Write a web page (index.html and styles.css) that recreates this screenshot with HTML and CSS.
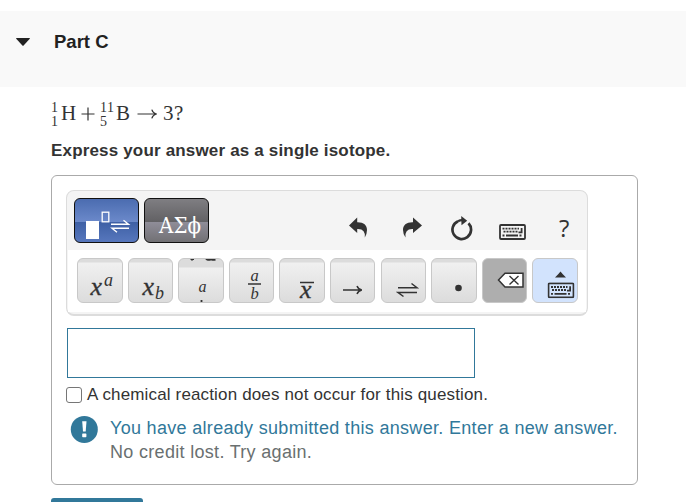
FILE: index.html
```html
<!DOCTYPE html>
<html lang="en">
<head>
  <meta charset="UTF-8">
  <meta name="viewport" content="width=device-width, initial-scale=1.0">
  <title>Part C</title>
  <link rel="stylesheet" href="styles.css">
</head>
<body>
  <svg class="defs" width="0" height="0">
    <symbol id="keyboard" viewBox="0 0 27 16">
      <rect x="1" y="1" width="25" height="14" rx="1" fill="none" stroke="#333" stroke-width="1.8"/>
      <path d="M3.5 4.7H20M4.5 7.7H19M3.5 11.5H5.5M20.5 11.5H23.5" stroke="#333" stroke-width="1.8" stroke-dasharray="2 1" fill="none"/>
      <path d="M7 11.5H19M22.6 4V8.3H19.5" stroke="#333" stroke-width="1.8" fill="none"/>
    </symbol>
  </svg>

  <header class="part-header">
    <svg class="caret" width="14" height="8" viewBox="0 0 14 8"><path d="M0 0.5Q0 0 .7 0H13.3Q14 0 14 .5L7.6 7.5Q7 8 6.4 7.5Z" fill="#222"/></svg>
    <h2>Part C</h2>
  </header>

  <main class="content">
    <div class="formula">
      <span class="scripts"><span>1</span><span>1</span></span>
      <span class="atom">H</span>
      <svg class="plus" width="14" height="14" viewBox="0 0 14 14"><path d="M7 .5V13.5M.5 7H13.5" stroke="#333" stroke-width="1.2" fill="none"/></svg>
      <span class="scripts wide"><span>11</span><span>5</span></span>
      <span class="atom">B</span>
      <svg class="to" width="20" height="10" viewBox="0 0 20 10"><path d="M.5 5H19M14.8 .7C15.5 3 17 4.4 19.2 5C17 5.6 15.5 7 14.8 9.3" stroke="#333" stroke-width="1.2" fill="none"/></svg>
      <span class="result">3?</span>
    </div>
    <p class="instruction">Express your answer as a single isotope.</p>

    <section class="answer-box">
      <div class="toolbar">
        <div class="toolbar-top">
          <button class="mode mode-active" aria-label="Templates">
            <svg width="65" height="45" viewBox="0 0 65 45">
              <rect x="12" y="23" width="13" height="18" fill="#fff"/>
              <rect x="28.2" y="14.2" width="6.6" height="9.6" fill="none" stroke="#fff" stroke-width="1.3"/>
              <path d="M37 26.2H54.5L49.5 22.2M55 30.2H38L43 34.2" stroke="#fff" stroke-width="1.4" fill="none"/>
            </svg>
          </button>
          <button class="mode mode-greek" aria-label="Symbols">ΑΣϕ</button>
          <div class="actions">
            <svg width="19" height="21" viewBox="0 0 19 21"><path d="M0 8.5L8.2 .5V5.2C14.5 5 18 8 18 13Q18 17 15.8 20.5Q16.8 11.5 8.2 12V16Z" fill="#333"/></svg>
            <svg width="20" height="21" viewBox="0 0 20 21"><path d="M20 8.5L11 .5V5.2C4.5 5 1 8 1 13Q1 17 3.5 20.5Q2.5 11.5 11 12V16Z" fill="#333"/></svg>
            <svg width="22" height="25" viewBox="0 0 22 25"><path d="M7 5.2A9.3 9.3 0 1 0 17.5 7.3" fill="none" stroke="#333" stroke-width="2.7"/><path d="M10.2 0L16.2 4.7L10.5 9.2Z" fill="#333"/><path d="M7 5.2Q9 4.2 11 4.2" stroke="#333" stroke-width="2.3" fill="none"/></svg>
            <svg class="kb" width="27" height="16"><use href="#keyboard"/></svg>
            <span class="help">?</span>
          </div>
        </div>
        <div class="toolbar-keys">
          <button class="key"><svg viewBox="0 0 45 45"><text class="math math-x" x="13.5" y="36.5" font-size="26">x</text><text class="math" x="27" y="27.5" font-size="18">a</text></svg></button>
          <button class="key"><svg viewBox="0 0 45 45"><text class="math math-x" x="14.5" y="36.5" font-size="26">x</text><text class="math" x="27" y="40.5" font-size="18">b</text></svg></button>
          <button class="key key-stack"><svg viewBox="0 0 45 45"><path d="M14 0V2.6M16 1H12.5M28 0Q28.5 2.5 32.5 1.5V0M32.5 0Q33 2.6 37.5 1.5" stroke="#333" stroke-width="1.9" fill="none"/><text class="math" x="20.5" y="33.5" font-size="16">a</text><path d="M23.5 42V44.5" stroke="#333" stroke-width="1.8"/></svg></button>
          <button class="key"><svg viewBox="0 0 45 45"><text class="math" x="21.5" y="22.5" font-size="16.5">a</text><path d="M19 26H32" stroke="#333" stroke-width="1.5"/><text class="math" x="21.5" y="41" font-size="16.5">b</text></svg></button>
          <button class="key"><svg viewBox="0 0 45 45"><path d="M21 24.5H35" stroke="#333" stroke-width="1.6"/><text class="math math-x" x="21" y="40" font-size="26">x</text></svg></button>
          <button class="key"><svg viewBox="0 0 45 45"><path d="M13 32H31.5M27 28C28 30.5 29.5 31.5 31.8 32C29.5 32.5 28 33.5 27 36" stroke="#333" stroke-width="1.5" fill="none"/></svg></button>
          <button class="key"><svg viewBox="0 0 45 45"><path d="M17 29.7H36L30.5 25.5M36 34.5H17L22.5 38.5" stroke="#333" stroke-width="1.5" fill="none"/></svg></button>
          <button class="key"><svg viewBox="0 0 45 45"><circle cx="27.5" cy="30" r="3.3" fill="#333"/></svg></button>
          <button class="key key-delete"><svg viewBox="0 0 45 45"><path d="M16.5 22L23 15.3H41V29H23Z" fill="#fff" stroke="#333" stroke-width="1.5"/><path d="M27.5 18L36.5 26.5M36.5 18L27.5 26.5" stroke="#333" stroke-width="1.4"/></svg></button>
          <button class="key key-keyboard"><svg viewBox="0 0 45 45"><path d="M23 19.5Q27 15.5 28.5 13.5Q30 15.5 34 19.5Z" fill="#333"/><use href="#keyboard" x="15.5" y="24.3" width="27" height="16"/></svg></button>
        </div>
      </div>

      <input class="answer-input" type="text" aria-label="Answer">

      <label class="no-reaction"><input type="checkbox"><span>A chemical reaction does not occur for this question.</span></label>

      <div class="feedback">
        <svg width="28" height="28" viewBox="0 0 28 28"><circle cx="14.3" cy="14.4" r="13.5" fill="#31789a"/><path d="M12.2 6.2H16.5L15.7 16.4H13Z" fill="#fff"/><rect x="12.2" y="18.4" width="4.2" height="3.8" rx=".7" fill="#fff"/></svg>
        <div class="feedback-text">
          <p class="feedback-title">You have already submitted this answer. Enter a new answer.</p>
          <p class="feedback-note">No credit lost. Try again.</p>
        </div>
      </div>
    </section>

    <button class="submit" aria-label="Submit"></button>
  </main>
</body>
</html>
```
FILE: styles.css
```css
* {
  box-sizing: border-box;
}
html,
body {
  height: 100%;
  overflow: hidden;
}
body {
  margin: 0;
  padding-top: 11px;
  background: #fff;
  color: #333;
  font-family: "Liberation Sans", Arial, sans-serif;
}
h2,
p {
  margin: 0;
}
button {
  padding: 0;
  border: none;
}
.defs {
  position: absolute;
}
.part-header {
  display: flex;
  align-items: center;
  gap: 24px;
  height: 76px;
  padding: 0 0 14px 16px;
  background: #f9f9f9;
}
.part-header h2 {
  color: #222;
  font-size: 18.5px;
  line-height: 22px;
}
.content {
  padding-left: 51px;
}

/* formula */
.formula {
  display: flex;
  align-items: center;
  height: 53px;
  padding-bottom: 2px;
  font-family: "Liberation Serif", "Times New Roman", serif;
  font-size: 21px;
  line-height: 24px;
}
.scripts {
  display: flex;
  flex-direction: column;
  width: 10px;
  padding-top: 4px;
  font-size: 14px;
  line-height: 14px;
}
.scripts.wide {
  width: 16px;
  letter-spacing: 0.5px;
}
.atom {
  width: 15px;
}
.plus {
  margin: 2px 5px 0 5px;
}
.to {
  margin: 2px 6px 0 6px;
}
.result {
  letter-spacing: 0.5px;
}
.instruction {
  height: 35px;
  font-size: 17px;
  font-weight: bold;
  line-height: 22px;
  letter-spacing: 0.17px;
}

/* answer area */
.answer-box {
  display: flex;
  flex-direction: column;
  align-items: flex-start;
  width: 587px;
  height: 310px;
  padding: 14px 15px;
  border: 1px solid #aaa;
  border-radius: 6px;
}
.toolbar {
  width: 522px;
  height: 126px;
  margin-left: -1px;
  padding: 0 1px;
  border: 1px solid #dcdcdc;
  border-bottom-width: 2px;
  border-radius: 8px;
  background: #f4f4f4;
}
.toolbar-top {
  display: flex;
  align-items: flex-start;
  gap: 5px;
  height: 59px;
  padding: 7px 0 0 6px;
}
.mode {
  width: 65px;
  height: 45px;
  border: 1px solid #111;
  border-radius: 6px;
  color: #fff;
  overflow: hidden;
}
.mode svg {
  display: block;
  margin: -1px;
}
.mode-active {
  background: linear-gradient(#4b6cb0, #6b89ca 53%, #3e60a5 54%, #5777bd);
}
.mode-greek {
  padding: 10px 0 0 7px;
  background: linear-gradient(#7f7e82, #626164 53%, #8f8d98 54%, #717074);
  font-family: "DejaVu Serif Condensed", "DejaVu Serif", serif;
  font-size: 22px;
  line-height: 26px;
}
.actions {
  display: flex;
  flex: 1;
  padding: 19px 14px 0 135px;
}
.actions svg:nth-child(2) {
  margin-left: 34px;
}
.actions svg:nth-child(3) {
  margin: -1px 0 0 29px;
}
.actions .kb {
  margin: 7px 0 0 26px;
}
.help {
  margin: -2px 0 0 33px;
  font-family: "Open Sans", sans-serif;
  font-size: 24px;
  line-height: 25px;
}
.toolbar-keys {
  display: flex;
  gap: 5.1px;
  height: 62px;
  padding: 8px 0 0 9px;
  background: #fff;
}
.key {
  width: 45.5px;
  height: 45px;
  border: 1px solid #c8c8c8;
  border-radius: 6px;
  background: linear-gradient(#dcdcdc 3px, #f0f0f0 4px, #dcdcdc);
  overflow: hidden;
}
.key svg {
  display: block;
  width: 45px;
  height: 45px;
  margin: -1px;
}
.key-stack {
  background: linear-gradient(#dcdcdc 8px, #f0f0f0 9px, #dcdcdc);
}
.key-delete {
  background: #aeaeae;
}
.key-keyboard {
  background: #d2e3fd;
}
.math {
  fill: #333;
  font-family: "Liberation Serif", "Times New Roman", serif;
  font-style: italic;
}
.math-x {
  stroke: #333;
  stroke-width: 0.3px;
}
.answer-input {
  width: 408px;
  height: 50px;
  margin-top: 12px;
  border: 1px solid #31789a;
  outline: none;
}
.no-reaction {
  display: flex;
  align-items: center;
  gap: 5px;
  height: 22px;
  margin: 6px 0 0 -1px;
  font-size: 17px;
  line-height: 22px;
  letter-spacing: 0.15px;
}
.no-reaction input {
  appearance: none;
  width: 16px;
  height: 16px;
  margin: 0;
  border: 1px solid #767676;
  border-radius: 3px;
  background: #fff;
}
.feedback {
  display: flex;
  gap: 12px;
  margin: 9px 0 0 3px;
  font-size: 18px;
  line-height: 24px;
  letter-spacing: 0.31px;
  white-space: nowrap;
}
.feedback-text {
  padding-top: 1px;
}
.feedback-title {
  color: #31789a;
}
.feedback-note {
  color: #6a7070;
}
.submit {
  display: block;
  width: 92px;
  height: 4px;
  margin-top: 13px;
  border-radius: 3px 3px 0 0;
  background: #31789a;
}
```
